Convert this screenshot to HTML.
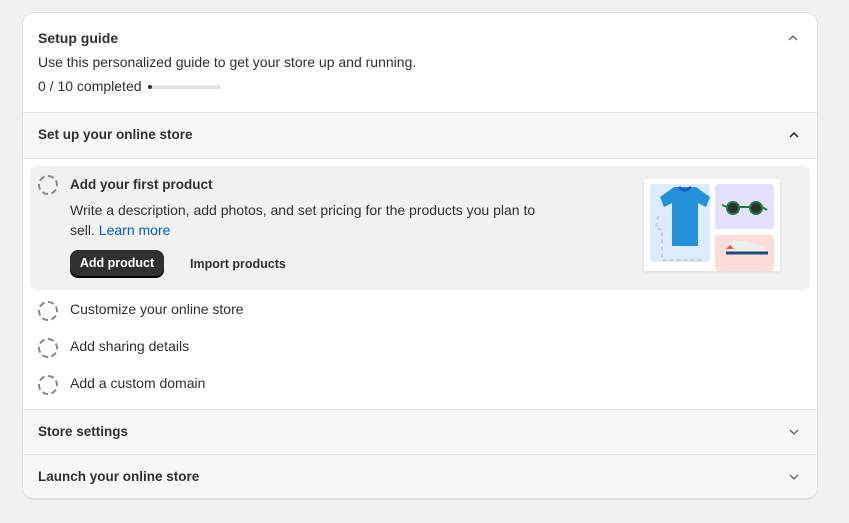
<!DOCTYPE html>
<html><head><style>
body{margin:0;background:#f1f1f1;font-family:"Liberation Sans",sans-serif;color:#303030;font-size:14px;}
.card{position:absolute;left:22px;top:12px;width:794px;height:485px;background:#fff;border:1px solid #e3e3e3;border-radius:12px;overflow:hidden;box-shadow:0 1px 0 rgba(0,0,0,.08)}
.abs{position:absolute}
.b{font-weight:bold;font-size:13.5px}
.sec{position:absolute;left:0;width:794px;background:#f7f7f7;border-top:1px solid #e3e3e3}
.chev{position:absolute;width:12px;height:8px}
.circ{position:absolute;left:15px;width:16px;height:16px;border:2px dashed #8a8a8a;border-radius:50%}
</style></head><body>
<div class="card">
 <div class="abs b" style="left:15px;top:17px;font-size:14px">Setup guide</div>
 <div class="abs" style="left:15px;top:41px">Use this personalized guide to get your store up and running.</div>
 <div class="abs" style="left:15px;top:65px">0 / 10 completed</div>
 <div class="abs" style="left:125px;top:72px;width:73px;height:4px;background:#e3e3e3;border-radius:2px"><div style="width:4px;height:4px;background:#303030;border-radius:2px"></div></div>
 <svg class="chev" style="left:764px;top:21px" viewBox="0 0 12 8"><path d="M2 6l4-4 4 4" fill="none" stroke="#616161" stroke-width="1.3"/></svg>

 <div class="sec" style="top:99px;height:45px;border-bottom:1px solid #e3e3e3"><div class="abs b" style="left:15px;top:14px">Set up your online store</div>
 <svg class="chev" style="left:765px;top:18px" viewBox="0 0 12 8"><path d="M2 6l4-4 4 4" fill="none" stroke="#303030" stroke-width="1.6"/></svg></div>

 <div class="abs" style="left:7px;top:153px;width:780px;height:124px;background:#f1f1f1;border-radius:8px"></div>
 <div class="circ" style="top:162px"></div>
 <div class="abs b" style="left:47px;top:164px">Add your first product</div>
 <div class="abs" style="left:47px;top:187px;line-height:20px;width:470px">Write a description, add photos, and set pricing for the products you plan to sell. <span style="color:#005bd3">Learn more</span></div>
 <div class="abs b" style="left:47px;top:237px;width:94px;height:27px;background:#303030;color:#fff;border-radius:8px;font-size:12.5px;text-align:center;line-height:27px;box-shadow:inset 0 -1px 0 #000,0 1px 0 #000">Add product</div>
 <div class="abs b" style="left:167px;top:244px;font-size:12.5px">Import products</div>
 <div class="abs" style="left:621px;top:166px;width:136px;height:92px;background:#fff;overflow:hidden;box-shadow:0 1px 3px rgba(0,0,0,.1)">
  <div class="abs" style="left:6px;top:5px;width:60px;height:78px;background:#dcebff;border-radius:3px"></div>
  <div class="abs" style="left:71px;top:5px;width:59px;height:45px;background:#e6e0ff;border-radius:3px"></div>
  <div class="abs" style="left:71px;top:56px;width:59px;height:36px;background:#fddcdc;border-radius:3px"></div>
  <svg class="abs" style="left:0;top:0" width="136" height="92" viewBox="0 0 136 92">
   <path d="M14 37l-2 12 6 2v30h40" fill="none" stroke="#ccc" stroke-width="2" stroke-dasharray="4 3"/>
   <path d="M30 8h22l14 10-4 10-8-4v43H28V24l-8 4-4-10z" fill="#2591d8"/>
   <path d="M35 8q6 6 12 0" fill="none" stroke="#1b5cbf" stroke-width="3"/>
   <circle cx="89" cy="29" r="6" fill="#303030" stroke="#1f7a3f" stroke-width="2"/>
   <circle cx="112" cy="29" r="6" fill="#303030" stroke="#1f7a3f" stroke-width="2"/>
   <path d="M95 28h11M83 28l-5-2M118 28l5 3" stroke="#1f7a3f" stroke-width="2"/>
   <path d="M84 70l4-8 14 0 18 6 3 4h-39z" fill="#eee"/><path d="M82 70l4-4 4 4z" fill="#e85a3a"/>
   <path d="M82 74h42" stroke="#1b4d7a" stroke-width="3"/>
  </svg>
 </div>

 <div class="circ" style="top:288px"></div><div class="abs" style="left:47px;top:288px">Customize your online store</div>
 <div class="circ" style="top:325px"></div><div class="abs" style="left:47px;top:325px">Add sharing details</div>
 <div class="circ" style="top:362px"></div><div class="abs" style="left:47px;top:362px">Add a custom domain</div>

 <div class="sec" style="top:396px;height:45px"><div class="abs b" style="left:15px;top:14px">Store settings</div>
 <svg class="chev" style="left:765px;top:18px" viewBox="0 0 12 8"><path d="M2 2l4 4 4-4" fill="none" stroke="#616161" stroke-width="1.3"/></svg></div>
 <div class="sec" style="top:441px;height:44px"><div class="abs b" style="left:15px;top:14px">Launch your online store</div>
 <svg class="chev" style="left:765px;top:18px" viewBox="0 0 12 8"><path d="M2 2l4 4 4-4" fill="none" stroke="#616161" stroke-width="1.3"/></svg></div>
</div>
</body></html>
